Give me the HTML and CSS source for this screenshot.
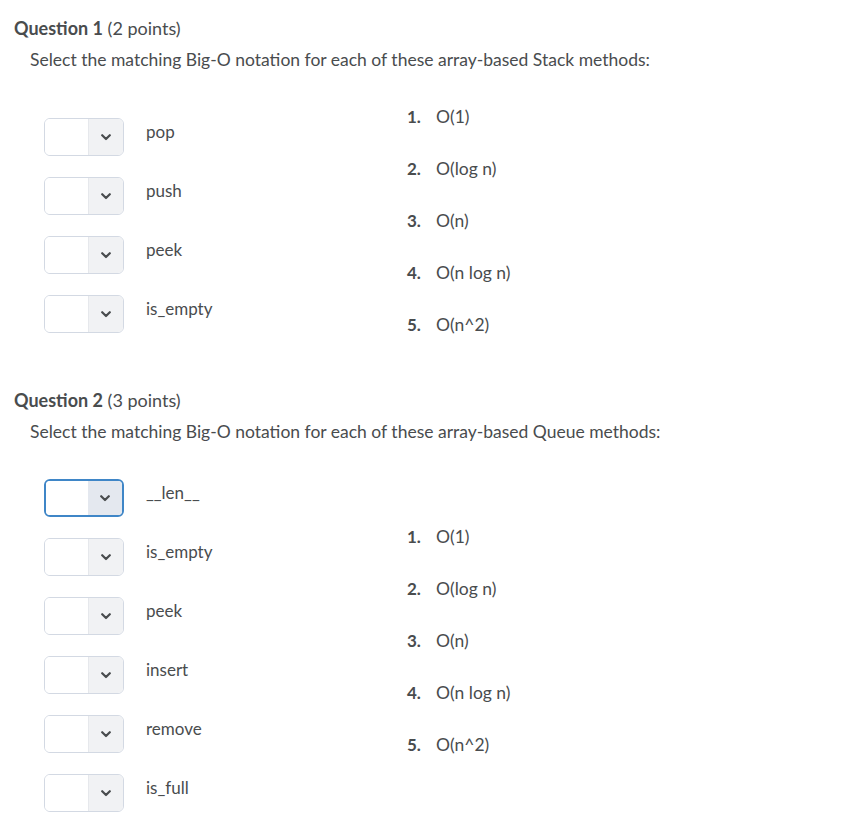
FILE: index.html
```html
<!DOCTYPE html>
<html lang="en">
<head>
    <meta charset="UTF-8" />
    <meta name="viewport" content="width=device-width, initial-scale=1.0"/>
    <title>Quiz - Big-O Matching</title>
    <link rel="stylesheet" href="styles.css">
</head>
<body>
    <div class="question">
        <h2 class="q-title"><strong>Question 1</strong> (2 points)</h2>
        <p class="q-text">Select the matching Big-O notation for each of these array-based Stack methods:</p>
        <div class="matching">
            <div class="pairs">
                <div class="pair">
                    <div class="select"><span class="select-value"></span><span class="select-arrow"><svg width="10" height="7" viewBox="0 0 10 7"><path d="M1.2 1.2 L5 5 L8.8 1.2" fill="none" stroke="#494c4e" stroke-width="2.2" stroke-linecap="round" stroke-linejoin="round"/></svg></span></div>
                    <span class="pair-label">pop</span>
                </div>
                <div class="pair">
                    <div class="select"><span class="select-value"></span><span class="select-arrow"><svg width="10" height="7" viewBox="0 0 10 7"><path d="M1.2 1.2 L5 5 L8.8 1.2" fill="none" stroke="#494c4e" stroke-width="2.2" stroke-linecap="round" stroke-linejoin="round"/></svg></span></div>
                    <span class="pair-label">push</span>
                </div>
                <div class="pair">
                    <div class="select"><span class="select-value"></span><span class="select-arrow"><svg width="10" height="7" viewBox="0 0 10 7"><path d="M1.2 1.2 L5 5 L8.8 1.2" fill="none" stroke="#494c4e" stroke-width="2.2" stroke-linecap="round" stroke-linejoin="round"/></svg></span></div>
                    <span class="pair-label">peek</span>
                </div>
                <div class="pair">
                    <div class="select"><span class="select-value"></span><span class="select-arrow"><svg width="10" height="7" viewBox="0 0 10 7"><path d="M1.2 1.2 L5 5 L8.8 1.2" fill="none" stroke="#494c4e" stroke-width="2.2" stroke-linecap="round" stroke-linejoin="round"/></svg></span></div>
                    <span class="pair-label">is_empty</span>
                </div>
            </div>
            <ol class="choices">
                <li><span class="num">1.</span>O(1)</li>
                <li><span class="num">2.</span>O(log n)</li>
                <li><span class="num">3.</span>O(n)</li>
                <li><span class="num">4.</span>O(n log n)</li>
                <li><span class="num">5.</span>O(n^2)</li>
            </ol>
        </div>
    </div>

    <div class="question">
        <h2 class="q-title"><strong>Question 2</strong> (3 points)</h2>
        <p class="q-text">Select the matching Big-O notation for each of these array-based Queue methods:</p>
        <div class="matching">
            <div class="pairs">
                <div class="pair">
                    <div class="select focused"><span class="select-value"></span><span class="select-arrow"><svg width="10" height="7" viewBox="0 0 10 7"><path d="M1.2 1.2 L5 5 L8.8 1.2" fill="none" stroke="#494c4e" stroke-width="2.2" stroke-linecap="round" stroke-linejoin="round"/></svg></span></div>
                    <span class="pair-label">__len__</span>
                </div>
                <div class="pair">
                    <div class="select"><span class="select-value"></span><span class="select-arrow"><svg width="10" height="7" viewBox="0 0 10 7"><path d="M1.2 1.2 L5 5 L8.8 1.2" fill="none" stroke="#494c4e" stroke-width="2.2" stroke-linecap="round" stroke-linejoin="round"/></svg></span></div>
                    <span class="pair-label">is_empty</span>
                </div>
                <div class="pair">
                    <div class="select"><span class="select-value"></span><span class="select-arrow"><svg width="10" height="7" viewBox="0 0 10 7"><path d="M1.2 1.2 L5 5 L8.8 1.2" fill="none" stroke="#494c4e" stroke-width="2.2" stroke-linecap="round" stroke-linejoin="round"/></svg></span></div>
                    <span class="pair-label">peek</span>
                </div>
                <div class="pair">
                    <div class="select"><span class="select-value"></span><span class="select-arrow"><svg width="10" height="7" viewBox="0 0 10 7"><path d="M1.2 1.2 L5 5 L8.8 1.2" fill="none" stroke="#494c4e" stroke-width="2.2" stroke-linecap="round" stroke-linejoin="round"/></svg></span></div>
                    <span class="pair-label">insert</span>
                </div>
                <div class="pair">
                    <div class="select"><span class="select-value"></span><span class="select-arrow"><svg width="10" height="7" viewBox="0 0 10 7"><path d="M1.2 1.2 L5 5 L8.8 1.2" fill="none" stroke="#494c4e" stroke-width="2.2" stroke-linecap="round" stroke-linejoin="round"/></svg></span></div>
                    <span class="pair-label">remove</span>
                </div>
                <div class="pair">
                    <div class="select"><span class="select-value"></span><span class="select-arrow"><svg width="10" height="7" viewBox="0 0 10 7"><path d="M1.2 1.2 L5 5 L8.8 1.2" fill="none" stroke="#494c4e" stroke-width="2.2" stroke-linecap="round" stroke-linejoin="round"/></svg></span></div>
                    <span class="pair-label">is_full</span>
                </div>
            </div>
            <ol class="choices">
                <li><span class="num">1.</span>O(1)</li>
                <li><span class="num">2.</span>O(log n)</li>
                <li><span class="num">3.</span>O(n)</li>
                <li><span class="num">4.</span>O(n log n)</li>
                <li><span class="num">5.</span>O(n^2)</li>
            </ol>
        </div>
    </div>
</body>
</html>
```

FILE: styles.css
```css
* {
    margin: 0;
    padding: 0;
    box-sizing: border-box;
}

body {
    font-family: Lato, "Open Sans", sans-serif;
    color: #494c4e;
    background: #fff;
    padding: 16px 14px 0 14px;
}

.question {
    margin-bottom: 42px;
}

.q-title {
    font-size: 18px;
    font-weight: 400;
    line-height: 24px;
}

.q-title strong {
    font-weight: 700;
}

.q-text {
    font-size: 17.5px;
    line-height: 24px;
    margin-top: 8px;
    padding-left: 16px;
}

.matching {
    display: flex;
    align-items: center;
    margin-top: 33px;
    padding-left: 30px;
}

.question + .question .matching {
    margin-top: 35px;
}

.pairs {
    width: 363px;
    display: flex;
    flex-direction: column;
    gap: 21px;
}

.pair {
    display: flex;
    align-items: flex-start;
}

.select {
    width: 80px;
    height: 38px;
    border: 1px solid #d3d9e3;
    border-radius: 6px;
    display: flex;
    overflow: hidden;
    flex-shrink: 0;
}

.select-value {
    width: 43px;
    background: #fff;
}

.select-arrow {
    flex: 1;
    background: #f1f2f4;
    border-left: 1px solid #e6e8ec;
    display: flex;
    align-items: center;
    justify-content: center;
}

.select.focused {
    border: 2px solid #3f86c7;
}

.select.focused .select-value {
    width: 42px;
}

.select.focused .select-arrow {
    background: #e4e8ef;
    border-left: none;
}

.pair-label {
    font-size: 17px;
    line-height: 24px;
    margin-left: 22px;
    padding-top: 2px;
}

.choices {
    list-style: none;
    font-size: 17.5px;
    padding-bottom: 9px;
}

.choices li {
    line-height: 24px;
    margin-bottom: 28px;
}

.choices li:last-child {
    margin-bottom: 0;
}

.num {
    display: inline-block;
    width: 29px;
    font-size: 17px;
    font-weight: 700;
}
```
